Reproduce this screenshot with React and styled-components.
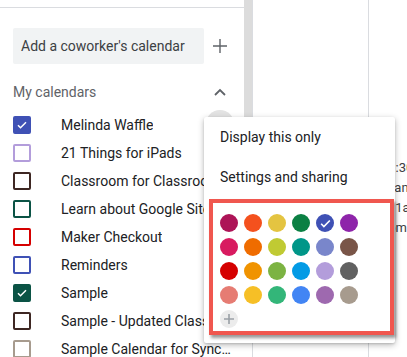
import React from 'react';
import styled, { createGlobalStyle } from 'styled-components';

const GlobalStyle = createGlobalStyle`
  body {
    margin: 0;
    font-family: Roboto, "Liberation Sans", Arial, sans-serif;
    background: #fff;
  }
`;

const calendars = [
  { name: 'Melinda Waffle', color: '#3f51b5', checked: true },
  { name: '21 Things for iPads', color: '#b39ddb' },
  { name: 'Classroom for Classroom Teachers', color: '#3e2723' },
  { name: 'Learn about Google Sites', color: '#0b5345' },
  { name: 'Maker Checkout', color: '#d50000' },
  { name: 'Reminders', color: '#3f51b5' },
  { name: 'Sample', color: '#0b5345', checked: true },
  { name: 'Sample - Updated Class', color: '#3e2723' },
  { name: 'Sample Calendar for Syncing', color: '#a79b8e' },
];

const swatches = [
  '#ad1457', '#f4511e', '#e4c441', '#0b8043', '#3f51b5', '#8e24aa',
  '#d81b60', '#ef6c00', '#c0ca33', '#009688', '#7986cb', '#795548',
  '#d50000', '#f09300', '#7cb342', '#039be5', '#b39ddb', '#616161',
  '#e67c73', '#f6bf26', '#33b679', '#4285f4', '#9e69af', '#a79b8e',
];

function Check({ size = 12 }) {
  return (
    <svg width={size} height={size} viewBox="0 0 24 24">
      <path d="M4 12.5l5 5L20 6.5" fill="none" stroke="#fff" strokeWidth="3" />
    </svg>
  );
}

function App() {
  return (
    <>
      <GlobalStyle />
      <Page>
        <Sidebar>
          <SideContent>
            <TopStrip />
            <SearchRow>
              <SearchBox>Add a coworker's calendar</SearchBox>
              <IconSlot>
                <svg width="14" height="14" viewBox="0 0 14 14">
                  <path d="M7 0v14M0 7h14" stroke="#5f6368" strokeWidth="1.4" />
                </svg>
              </IconSlot>
            </SearchRow>
            <SectionHeader>
              <SectionTitle>My calendars</SectionTitle>
              <IconSlot>
                <svg width="12" height="8" viewBox="0 0 12 8">
                  <path d="M1 7l5-5 5 5" fill="none" stroke="#5f6368" strokeWidth="1.8" />
                </svg>
              </IconSlot>
            </SectionHeader>
            <List>
              {calendars.map((c) => (
                <Row key={c.name}>
                  <Box color={c.color} $checked={c.checked}>
                    {c.checked && <Check />}
                  </Box>
                  <RowLabel>{c.name}</RowLabel>
                </Row>
              ))}
            </List>
          </SideContent>
          <Track>
            <Thumb />
          </Track>
        </Sidebar>
        <DayColumn />
        <EventColumn>
          <EventLine $indent={12}>11:30</EventLine>
          <EventLine $indent={14}>Plan</EventLine>
          <EventLine $indent={19}>11am</EventLine>
          <EventLine $indent={12}>3pm</EventLine>
        </EventColumn>
        <HoverCircle />
        <Menu>
          <MenuItem>Display this only</MenuItem>
          <MenuItem>Settings and sharing</MenuItem>
          <Palette>
            <SwatchGrid>
              {swatches.map((s, i) => (
                <Swatch key={i} color={s}>
                  {i === 4 && <Check size={13} />}
                </Swatch>
              ))}
              <AddSwatch>
                <svg width="10" height="10" viewBox="0 0 10 10">
                  <path d="M5 0v10M0 5h10" stroke="#9aa0a6" strokeWidth="1.6" />
                </svg>
              </AddSwatch>
            </SwatchGrid>
          </Palette>
        </Menu>
      </Page>
    </>
  );
}

const Page = styled.div`
  position: relative;
  display: flex;
  width: 407px;
  height: 357px;
  overflow: hidden;
  background: #fff;
`;

const Sidebar = styled.div`
  display: flex;
  width: 252px;
  border-right: 1px solid #dadce0;
  flex-shrink: 0;
`;

const SideContent = styled.div`
  width: 244px;
  flex-shrink: 0;
  white-space: nowrap;
  overflow: hidden;
`;

const TopStrip = styled.div`
  height: 7px;
  border-bottom: 1px solid #dadce0;
`;

const SearchRow = styled.div`
  display: flex;
  align-items: center;
  margin-top: 20px;
  padding-left: 13px;
`;

const SearchBox = styled.div`
  width: 183px;
  height: 36px;
  line-height: 36px;
  padding-left: 8px;
  background: #f1f3f4;
  border-radius: 2px;
  font-size: 14px;
  color: #3c4043;
`;

const IconSlot = styled.div`
  width: 32px;
  display: flex;
  justify-content: center;
  align-items: center;
`;

const SectionHeader = styled.div`
  display: flex;
  align-items: center;
  justify-content: space-between;
  margin-top: 14px;
  height: 28px;
  padding-left: 13px;
  width: 191px;
  & > div { margin-right: -32px; }
`;

const SectionTitle = styled.div`
  font-size: 14px;
  color: #5f6368;
`;

const List = styled.div`
  margin-top: 5px;
  padding-left: 13px;
`;

const Row = styled.div`
  display: flex;
  align-items: center;
  height: 28px;
`;

const Box = styled.div`
  width: 18px;
  height: 18px;
  box-sizing: border-box;
  border: 2px solid ${(p) => p.color};
  border-radius: 2px;
  background: ${(p) => (p.$checked ? p.color : 'transparent')};
  display: flex;
  align-items: center;
  justify-content: center;
  flex-shrink: 0;
`;

const RowLabel = styled.div`
  margin-left: 30px;
  max-width: 172px;
  overflow: hidden;
  text-overflow: ellipsis;
  font-size: 14px;
  color: #202124;
`;

const Track = styled.div`
  width: 8px;
`;

const Thumb = styled.div`
  height: 320px;
  background: #dcdcdc;
`;

const DayColumn = styled.div`
  width: 115px;
  border-right: 1px solid #dadce0;
  flex-shrink: 0;
`;

const EventColumn = styled.div`
  flex: 1;
  padding-top: 158px;
  white-space: nowrap;
  overflow: hidden;
`;

const EventLine = styled.div`
  padding-left: ${(p) => p.$indent}px;
  font-size: 13px;
  line-height: 20px;
  color: #3c4043;
`;

const HoverCircle = styled.div`
  position: absolute;
  left: 206px;
  top: 110px;
  width: 28px;
  height: 28px;
  border-radius: 50%;
  background: #e3e3e3;
`;

const Menu = styled.div`
  position: absolute;
  left: 204px;
  top: 117px;
  width: 191px;
  height: 226px;
  background: #fff;
  border-radius: 2px;
  box-shadow: 0 2px 6px rgba(0, 0, 0, 0.28), 0 1px 2px rgba(0, 0, 0, 0.12);
`;

const MenuItem = styled.div`
  height: 40px;
  line-height: 40px;
  padding-left: 16px;
  font-size: 14px;
  color: #202124;
`;

const Palette = styled.div`
  margin: 2px 0 0 5px;
  width: 185px;
  height: 136px;
  box-sizing: border-box;
  border: 4px solid #f0574f;
  box-shadow: 2px 3px 3px rgba(0, 0, 0, 0.4);
  padding: 11px 0 0 7px;
`;

const SwatchGrid = styled.div`
  display: grid;
  grid-template-columns: repeat(6, 18px);
  grid-auto-rows: 18px;
  gap: 6px;
`;

const Swatch = styled.div`
  border-radius: 50%;
  background: ${(p) => p.color};
  display: flex;
  align-items: center;
  justify-content: center;
`;

const AddSwatch = styled.div`
  border-radius: 50%;
  background: #ececec;
  display: flex;
  align-items: center;
  justify-content: center;
`;

export default App;
